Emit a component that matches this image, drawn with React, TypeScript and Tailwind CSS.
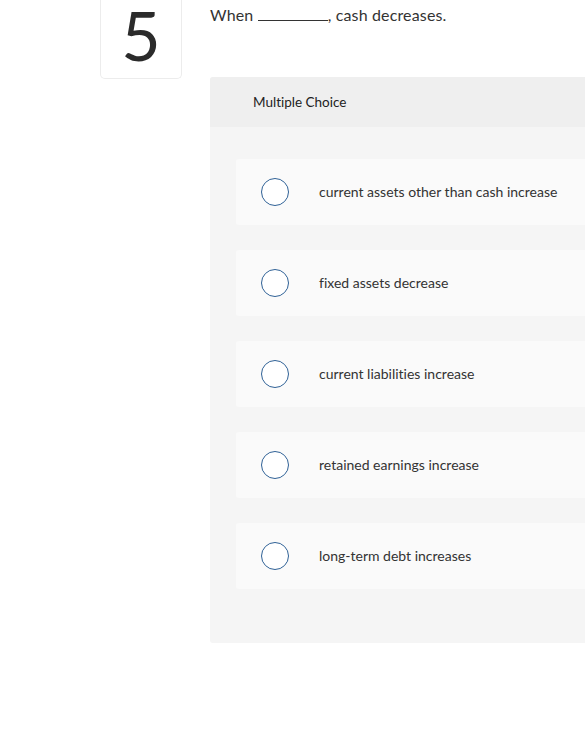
const options = [
  "current assets other than cash increase",
  "fixed assets decrease",
  "current liabilities increase",
  "retained earnings increase",
  "long-term debt increases",
];

function Radio() {
  return (
    <span className="block h-[28px] w-[28px] shrink-0 rounded-full border-[1.5px] border-[#2f6196] bg-white" />
  );
}

export default function App() {
  return (
    <div
      className="relative h-[751px] w-[585px] overflow-hidden bg-white text-[#333] [font-variant-ligatures:none]"
      style={{ fontFamily: "Lato, 'Open Sans', sans-serif" }}
    >
      <div className="flex">
        <div className="ml-[100px] flex h-[79px] w-[82px] shrink-0 items-start justify-center rounded-b-[5px] border border-t-0 border-[#ececec]">
          <span className="mt-[-1px] text-[68px] leading-[72px] font-normal text-[#2b2b2b]">5</span>
        </div>
        <div className="ml-[28px] flex min-w-0 flex-1 flex-col">
          <p className="mt-[5px] text-[16px] leading-[20px] tracking-[0.15px] text-[#333]">
            When{" "}
            <span className="inline-block h-[14px] w-[70px] border-b border-[#333] align-baseline" />
            , cash decreases.
          </p>
          <div className="mt-[52px] -mr-[40px] flex flex-col rounded-[3px] bg-[#f5f5f5] pb-[54px]">
            <div className="flex h-[50px] items-center rounded-t-[3px] bg-[#efefef] pl-[43px] text-[13.5px] text-[#222]">
              Multiple Choice
            </div>
            <div className="mt-[32px] flex flex-col gap-[25px] pl-[26px]">
              {options.map((o) => (
                <div
                  key={o}
                  className="flex h-[66px] items-center rounded-[3px] bg-[#fafafa] pl-[25px]"
                >
                  <Radio />
                  <span className="ml-[30px] mt-[-2px] text-[14px] text-[#333]">{o}</span>
                </div>
              ))}
            </div>
          </div>
        </div>
      </div>
    </div>
  );
}
